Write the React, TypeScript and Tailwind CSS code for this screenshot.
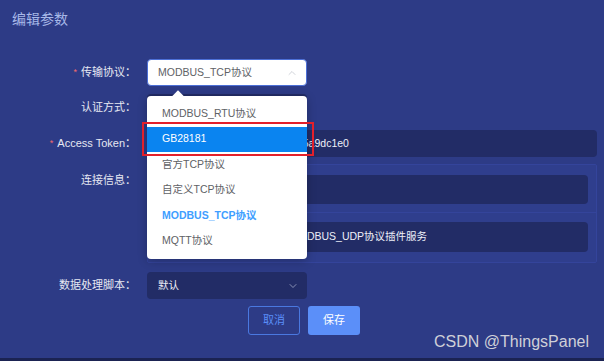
import React from 'react';
import { ChevronUp, ChevronDown } from 'lucide-react';

const font = { fontFamily: '"Liberation Sans", "Noto Sans CJK SC", sans-serif' };

const options = [
  { label: 'MODBUS_RTU协议' },
  { label: 'GB28181', hover: true },
  { label: '官方TCP协议' },
  { label: '自定义TCP协议' },
  { label: 'MODBUS_TCP协议', selected: true },
  { label: 'MQTT协议' },
];

function Label({ text, required, top }: { text: string; required?: boolean; top?: boolean }) {
  return (
    <div
      className={`w-[136px] shrink-0 flex justify-end text-[11px] text-[#e6e8f2] ${
        top ? 'items-start pt-[8px]' : 'items-center'
      }`}
    >
      {required && <span className="text-[#f56c6c] text-[9px] mr-[4px]">*</span>}
      <span>{text}</span>
    </div>
  );
}

function App() {
  return (
    <div className="relative w-[604px] h-[361px] overflow-hidden bg-[#2d3b86]" style={font}>
      <div className="h-[358px] flex flex-col">
        <div className="pl-[12px] pt-[10px] text-[14px] leading-[18px] text-[#a7b8e8]">编辑参数</div>

        <div className="mt-[31px] flex flex-col">
          {/* 传输协议 */}
          <div className="flex h-[27px]">
            <Label text="传输协议：" required />
            <div className="ml-[11px] w-[160px] h-[27px] bg-white rounded-[4px] border border-[#4c6fd6] flex items-center justify-between pl-[10px] pr-[8px]">
              <span className="text-[10.5px] text-[#606266]">MODBUS_TCP协议</span>
              <ChevronUp size={12} strokeWidth={1.5} className="text-[#c0c4cc]" />
            </div>
          </div>

          {/* 认证方式 */}
          <div className="flex h-[27px] mt-[8px]">
            <Label text="认证方式：" />
            <div className="ml-[11px] w-[160px] h-[27px] bg-[#222c66] rounded-[4px]" />
          </div>

          {/* Access Token */}
          <div className="flex h-[27px] mt-[9px]">
            <Label text="Access Token：" required />
            <div className="ml-[11px] w-[450px] h-[27px] bg-[#222c66] rounded-[4px] flex items-center pl-[11px]">
              <span className="text-[10.5px] text-[#eef0f8]">c1d7e2a4-8b36-4f0e-9a1b-e725a9dc1e0</span>
            </div>
          </div>

          {/* 连接信息 */}
          <div className="flex mt-[7px]">
            <Label text="连接信息：" top />
            <div className="ml-[11px] w-[450px] h-[99px] bg-[#2f3e8d] border border-[#34449b] rounded-[2px] flex flex-col">
              <div className="flex pt-[10px] pb-[8px] pr-[8px]">
                <div className="w-[132px] shrink-0" />
                <div className="flex-1 h-[29px] bg-[#222c66] rounded-[4px]" />
              </div>
              <div className="h-px bg-[#34449b]" />
              <div className="flex pt-[9px] pr-[8px]">
                <div className="w-[132px] shrink-0" />
                <div className="flex-1 h-[30px] bg-[#222c66] rounded-[4px] flex items-center pl-[10px]">
                  <span className="text-[10.5px] text-[#eef0f8]">MODBUS_UDP协议插件服务</span>
                </div>
              </div>
            </div>
          </div>

          {/* 数据处理脚本 */}
          <div className="flex h-[27px] mt-[9px]">
            <Label text="数据处理脚本：" />
            <div className="ml-[11px] w-[160px] h-[27px] bg-[#222c66] rounded-[4px] flex items-center justify-between pl-[11px] pr-[8px]">
              <span className="text-[10.5px] text-[#eef0f8]">默认</span>
              <ChevronDown size={12} strokeWidth={1.5} className="text-[#a9b0cc]" />
            </div>
          </div>

          {/* buttons */}
          <div className="flex mt-[7px] pl-[248px] gap-[8px]">
            <button className="w-[52px] h-[29px] rounded-[3px] border border-[#4a78e0] text-[11px] text-[#5b8ff9]">
              取消
            </button>
            <button className="w-[52px] h-[29px] rounded-[3px] bg-[#5b8ff9] text-[11px] text-white">
              保存
            </button>
          </div>
        </div>
      </div>
      <div className="h-[3px] bg-[#1b2352]" />

      {/* dropdown popper */}
      <div className="absolute left-[147px] top-[96px] w-[160px] h-[163px] bg-white rounded-[4px] shadow-[0_2px_10px_rgba(0,0,0,0.25)] pt-[5px]">
        <div className="absolute -top-[4px] left-[27px] w-[8px] h-[8px] bg-white rotate-45" />
        {options.map((o) => (
          <div
            key={o.label}
            className={`h-[25.5px] flex items-center pl-[15px] text-[10.5px] ${
              o.hover ? 'bg-[#0a84f0] text-white' : o.selected ? 'text-[#409eff] font-bold' : 'text-[#606266]'
            }`}
          >
            {o.label}
          </div>
        ))}
      </div>

      {/* highlight box */}
      <div className="absolute left-[142px] top-[122px] w-[172px] h-[34px] border-2 border-[#e3202b]" />

      {/* watermark */}
      <div className="absolute right-[15px] top-[333px] text-[16px] leading-[18px] text-[#cfd0d8]">
        CSDN @ThingsPanel
      </div>
    </div>
  );
}

export default App;
